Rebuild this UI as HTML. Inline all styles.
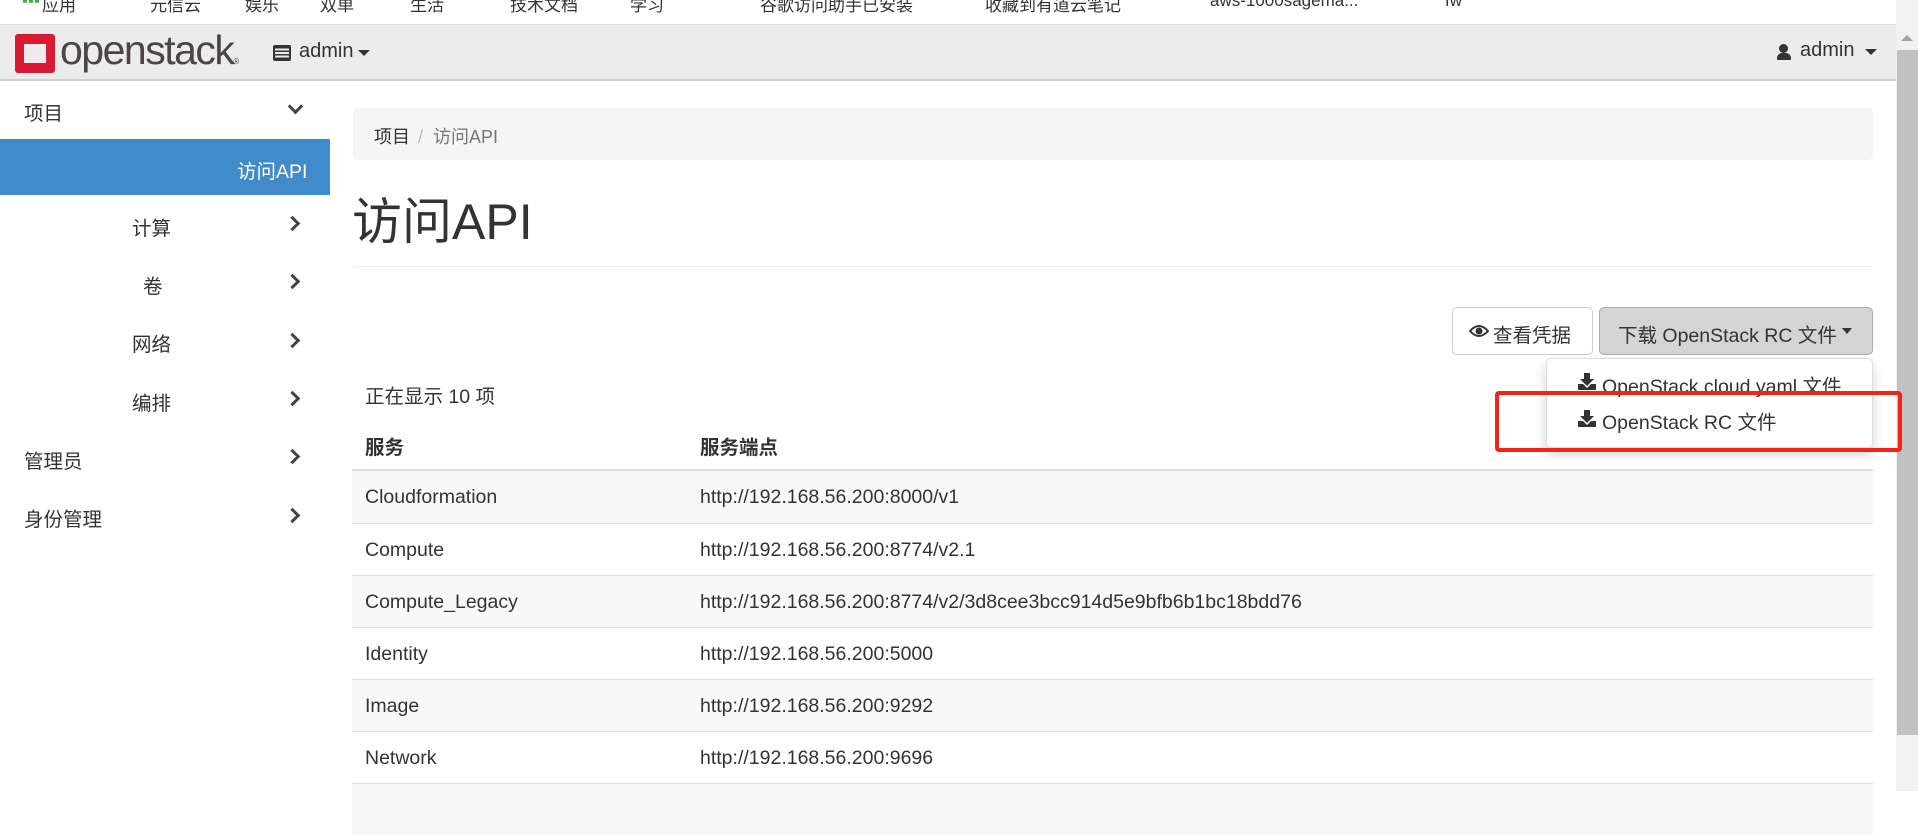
<!DOCTYPE html>
<html><head><meta charset="utf-8"><style>
*{box-sizing:border-box;margin:0;padding:0}
body{width:1918px;height:791px;overflow:hidden;background:#fff;font-family:"Liberation Sans","Noto Sans CJK SC",sans-serif;color:#333;font-size:19.5px;position:relative}
.abs{position:absolute}
.bm{top:-9px;font-size:17px;color:#333;white-space:nowrap}
.nav{top:24px;left:0;width:1896px;height:57px;background:#ececec;border-top:1px solid #ddd;border-bottom:2px solid #d0d0d0}
.side{font-size:19.5px;color:#333}
.chev{position:absolute;width:11px;height:11px;border-right:3px solid #444;border-bottom:3px solid #444}
.row{position:absolute;left:352px;width:1521px;height:52px;border-top:1px solid #ddd}
.row span{position:absolute;top:15px}
</style></head><body>
<div class="abs bm" style="left:22px;color:#4a4">▪▪▪</div>
<div class="abs bm" style="left:42px">应用</div>
<div class="abs bm" style="left:150px">元信云</div>
<div class="abs bm" style="left:245px">娱乐</div>
<div class="abs bm" style="left:320px">双单</div>
<div class="abs bm" style="left:410px">生活</div>
<div class="abs bm" style="left:510px">技术文档</div>
<div class="abs bm" style="left:630px">学习</div>
<div class="abs bm" style="left:760px">谷歌访问助手已安装</div>
<div class="abs bm" style="left:985px">收藏到有道云笔记</div>
<div class="abs bm" style="left:1210px">aws-1000sagema...</div>
<div class="abs bm" style="left:1445px">fw</div>
<div class="abs" style="left:1896px;top:0;width:22px;height:791px;background:#f1f1f1"></div>
<div class="abs" style="left:1897px;top:50px;width:21px;height:685px;background:#c1c1c1"></div>
<div class="abs" style="left:1901px;top:35px;width:0;height:0;border-left:6px solid transparent;border-right:6px solid transparent;border-bottom:6px solid #a3a3a3"></div>
<div class="abs nav"></div>
<div class="abs" style="left:15px;top:34px;width:40px;height:39px;background:#da1a32;border-radius:3px"></div>
<div class="abs" style="left:24px;top:44px;width:22px;height:19px;background:#ececec"></div>
<div class="abs" style="left:15px;top:49px;width:40px;height:9px;background:#ececec"></div>
<div class="abs" style="left:15px;top:49px;width:9px;height:9px;background:#da1a32"></div>
<div class="abs" style="left:46px;top:49px;width:9px;height:9px;background:#da1a32"></div>
<div class="abs" style="left:60px;top:27px;font-size:41px;color:#4b4545;letter-spacing:-1.5px">openstack<span style="font-size:8px;letter-spacing:0">®</span></div>
<div class="abs" style="left:273px;top:45px;width:18px;height:16px;border:2px solid #333;border-radius:2px;background:repeating-linear-gradient(#333 0 1.5px,#ececec 1.5px 3.5px)"></div>
<div class="abs" style="left:299px;top:40px;font-size:20px;color:#333">admin</div>
<div class="abs" style="left:358px;top:50px;border-left:6px solid transparent;border-right:6px solid transparent;border-top:6px solid #333"></div>
<div class="abs" style="left:1779px;top:44px;width:9px;height:9px;border-radius:50%;background:#333"></div>
<div class="abs" style="left:1777px;top:53px;width:14px;height:7px;border-radius:5px 5px 1px 1px;background:#333"></div>
<div class="abs" style="left:1800px;top:39px;font-size:20px;color:#333">admin</div>
<div class="abs" style="left:1865px;top:49px;border-left:6px solid transparent;border-right:6px solid transparent;border-top:6px solid #333"></div>
<div class="abs side" style="left:24px;top:97px">项目</div>
<div class="chev" style="left:290px;top:101px;transform:rotate(45deg)"></div>
<div class="abs" style="left:0;top:139px;width:330px;height:56px;background:#428bca"></div>
<div class="abs side" style="left:237px;top:155px;color:#fff">访问API</div>
<div class="abs side" style="left:132px;top:212px">计算</div>
<div class="abs side" style="left:143px;top:270px">卷</div>
<div class="abs side" style="left:132px;top:328px">网络</div>
<div class="abs side" style="left:132px;top:387px">编排</div>
<div class="abs side" style="left:24px;top:445px">管理员</div>
<div class="abs side" style="left:24px;top:503px">身份管理</div>
<div class="chev" style="left:287px;top:218px;transform:rotate(-45deg)"></div>
<div class="chev" style="left:287px;top:276px;transform:rotate(-45deg)"></div>
<div class="chev" style="left:287px;top:335px;transform:rotate(-45deg)"></div>
<div class="chev" style="left:287px;top:393px;transform:rotate(-45deg)"></div>
<div class="chev" style="left:287px;top:451px;transform:rotate(-45deg)"></div>
<div class="chev" style="left:287px;top:510px;transform:rotate(-45deg)"></div>
<div class="abs" style="left:353px;top:108px;width:1520px;height:52px;background:#f5f5f5;border-radius:5px"></div>
<div class="abs" style="left:374px;top:123px;font-size:18px">项目<span style="color:#bbb;margin:0 10px 0 8px">/</span><span style="color:#777">访问API</span></div>
<div class="abs" style="left:352px;top:182px;font-size:50px;color:#333">访问API</div>
<div class="abs" style="left:353px;top:266px;width:1520px;height:1px;background:#eee"></div>
<div class="abs" style="left:1452px;top:307px;width:141px;height:48px;border:1px solid #ccc;border-radius:5px;background:#fff"></div>
<svg class="abs" style="left:1469px;top:324px" width="20" height="14" viewBox="0 0 20 14"><path d="M1 7 Q10 -3 19 7 Q10 17 1 7Z" fill="none" stroke="#333" stroke-width="2"/><circle cx="10" cy="7" r="3.5" fill="#333"/></svg>
<div class="abs" style="left:1493px;top:319px;font-size:19.5px">查看凭据</div>
<div class="abs" style="left:1599px;top:307px;width:274px;height:48px;border:1px solid #adadad;border-radius:5px;background:#d4d4d4"></div>
<div class="abs" style="left:1618px;top:319px;font-size:19.5px">下载 OpenStack RC 文件</div>
<div class="abs" style="left:1842px;top:328px;border-left:5px solid transparent;border-right:5px solid transparent;border-top:6px solid #333"></div>
<div class="abs" style="left:1546px;top:358px;width:327px;height:90px;border:1px solid #ddd;border-radius:5px;background:#fff;box-shadow:0 6px 12px rgba(0,0,0,.18)"></div>
<svg class="abs" style="left:1578px;top:373px" width="18" height="17" viewBox="0 0 18 17"><path d="M6 0h6v6h4l-7 7-7-7h4z" fill="#333"/><path d="M0 11h5l4 4 4-4h5v6H0z" fill="#333"/></svg>
<div class="abs" style="left:1602px;top:370px;font-size:19.5px">OpenStack cloud.yaml 文件</div>
<svg class="abs" style="left:1578px;top:410px" width="18" height="17" viewBox="0 0 18 17"><path d="M6 0h6v6h4l-7 7-7-7h4z" fill="#333"/><path d="M0 11h5l4 4 4-4h5v6H0z" fill="#333"/></svg>
<div class="abs" style="left:1602px;top:406px;font-size:19.5px">OpenStack RC 文件</div>
<div class="abs" style="left:1495px;top:391px;width:407px;height:61px;border:4px solid #f5211b;border-radius:4px"></div>
<div class="abs" style="left:365px;top:380px">正在显示 10 项</div>
<div class="abs" style="left:365px;top:431px;font-weight:bold">服务</div>
<div class="abs" style="left:700px;top:431px;font-weight:bold">服务端点</div>
<div class="abs" style="left:352px;top:469px;width:1521px;height:3px;background:#ddd"></div>
<div class="row" style="top:471px;background:#f9f9f9;border-top:none"><span style="left:13px">Cloudformation</span><span style="left:348px">http://192.168.56.200:8000/v1</span></div>
<div class="row" style="top:523px"><span style="left:13px">Compute</span><span style="left:348px">http://192.168.56.200:8774/v2.1</span></div>
<div class="row" style="top:575px;background:#f9f9f9"><span style="left:13px">Compute_Legacy</span><span style="left:348px">http://192.168.56.200:8774/v2/3d8cee3bcc914d5e9bfb6b1bc18bdd76</span></div>
<div class="row" style="top:627px"><span style="left:13px">Identity</span><span style="left:348px">http://192.168.56.200:5000</span></div>
<div class="row" style="top:679px;background:#f9f9f9"><span style="left:13px">Image</span><span style="left:348px">http://192.168.56.200:9292</span></div>
<div class="row" style="top:731px"><span style="left:13px">Network</span><span style="left:348px">http://192.168.56.200:9696</span></div>
<div class="row" style="top:783px;background:#f9f9f9"></div>
</body></html>
